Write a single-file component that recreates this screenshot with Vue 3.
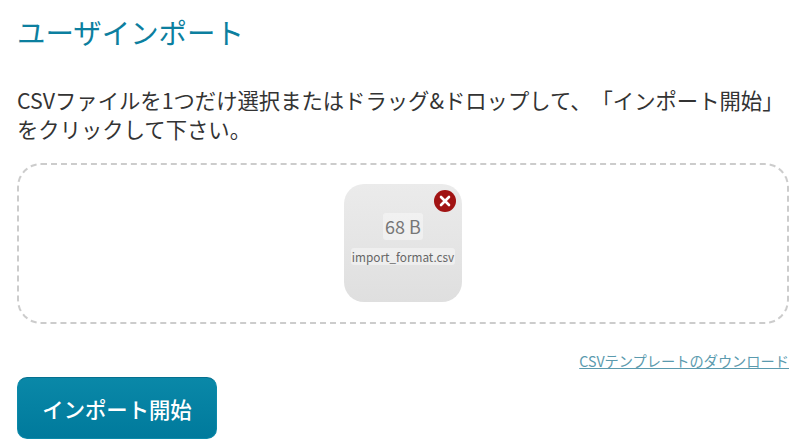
<script setup>
const file = { size: '68 B', name: 'import_format.csv' }
</script>

<template>
  <main class="page">
    <h1 class="title">ユーザインポート</h1>
    <p class="lead">CSVファイルを1つだけ選択またはドラッグ&amp;ドロップして、「インポート開始」をクリックして下さい。</p>
    <section class="drop">
      <div class="thumb">
        <span class="size">{{ file.size }}</span>
        <span class="name">{{ file.name }}</span>
        <span class="remove">
          <svg viewBox="0 0 24 24" width="24" height="24">
            <circle cx="12" cy="12" r="11" fill="#a11414" />
            <path d="M8 8 16 16M16 8 8 16" stroke="#fff" stroke-width="2.6" stroke-linecap="round" />
          </svg>
        </span>
      </div>
    </section>
    <div class="links"><a class="template" href="#">CSVテンプレートのダウンロード</a></div>
    <button class="start" type="button">インポート開始</button>
  </main>
</template>

<style>
html, body { margin: 0; background: #fff; }
</style>

<style scoped>
.page {
  width: 800px;
  height: 448px;
  box-sizing: border-box;
  padding: 14px 11px 0 17px;
  overflow: hidden;
  font-family: "Noto Sans CJK JP", "Noto Sans", sans-serif;
  color: #333;
  text-spacing-trim: space-all;
}
.title {
  margin: 0;
  font-size: 28.44px;
  font-weight: 400;
  line-height: 36px;
  color: #0c7f9f;
}
.lead {
  margin: 35px 0 0;
  font-size: 21.33px;
  line-height: 29px;
  color: #333;
}
.drop {
  margin-top: 20px;
  height: 161px;
  box-sizing: border-box;
  border: 2px dashed #ccc;
  border-radius: 24px;
  display: flex;
  justify-content: center;
  padding-top: 19px;
}
.thumb {
  position: relative;
  width: 118px;
  height: 118px;
  border-radius: 20px;
  background: linear-gradient(to bottom, #ebebeb, #dfdfdf);
  display: flex;
  flex-direction: column;
  align-items: center;
}
.size {
  margin-top: 29px;
  padding: 0 2px;
  font-size: 18px;
  line-height: 27px;
  color: #777;
  background: rgba(255, 255, 255, 0.4);
  border-radius: 3px;
}
.name {
  margin-top: 8px;
  padding: 0 1px;
  font-size: 11.8px;
  line-height: 17px;
  color: #666;
  background: rgba(255, 255, 255, 0.4);
  border-radius: 3px;
}
.remove {
  position: absolute;
  top: 5px;
  right: 5px;
  width: 24px;
  height: 24px;
}
.remove svg { display: block; }
.links {
  margin-top: 27px;
  text-align: right;
  font-size: 14.22px;
  line-height: 21px;
}
.template {
  color: #5a9aae;
  text-decoration: underline;
}
.start {
  display: block;
  margin-top: 5px;
  width: 200px;
  height: 62px;
  box-sizing: border-box;
  border: 1px solid #0b89a9;
  border-top-color: #05708f;
  border-radius: 10px;
  background: linear-gradient(to bottom, #0a88a8, #007a9c);
  color: #fff;
  font-family: inherit;
  font-size: 21.33px;
  font-weight: 500;
}
</style>
